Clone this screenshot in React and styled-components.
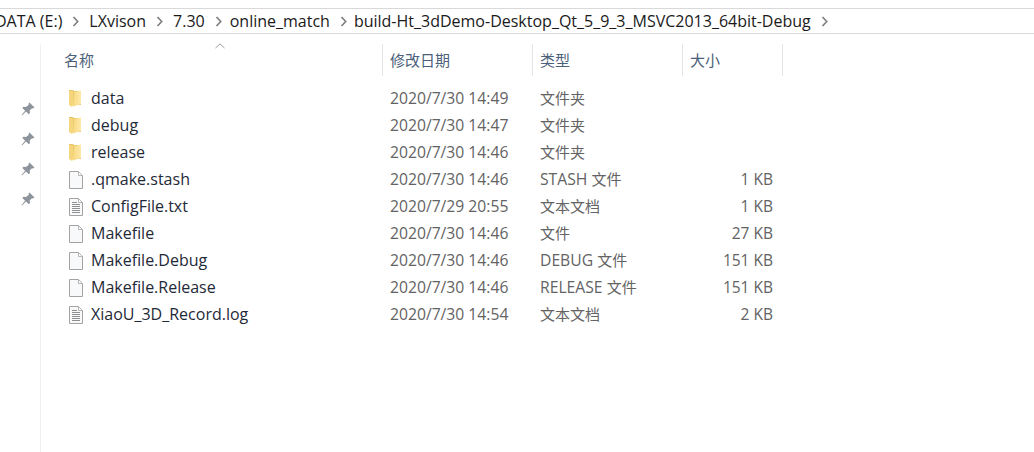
import React from 'react';
import styled, { createGlobalStyle } from 'styled-components';

const crumbs = ['DATA (E:)', 'LXvison', '7.30', 'online_match', 'build-Ht_3dDemo-Desktop_Qt_5_9_3_MSVC2013_64bit-Debug'];

const files = [
  { name: 'data', date: '2020/7/30 14:49', type: '文件夹', kind: 'folder' },
  { name: 'debug', date: '2020/7/30 14:47', type: '文件夹', kind: 'folder' },
  { name: 'release', date: '2020/7/30 14:46', type: '文件夹', kind: 'folder' },
  { name: '.qmake.stash', date: '2020/7/30 14:46', tag: 'STASH', type: '文件', size: '1 KB', kind: 'blank' },
  { name: 'ConfigFile.txt', date: '2020/7/29 20:55', type: '文本文档', size: '1 KB', kind: 'text' },
  { name: 'Makefile', date: '2020/7/30 14:46', type: '文件', size: '27 KB', kind: 'blank' },
  { name: 'Makefile.Debug', date: '2020/7/30 14:46', tag: 'DEBUG', type: '文件', size: '151 KB', kind: 'blank' },
  { name: 'Makefile.Release', date: '2020/7/30 14:46', tag: 'RELEASE', type: '文件', size: '151 KB', kind: 'blank' },
  { name: 'XiaoU_3D_Record.log', date: '2020/7/30 14:54', type: '文本文档', size: '2 KB', kind: 'text' },
];

function Chevron() {
  return (
    <svg width="8" height="11" viewBox="0 0 8 11">
      <path d="M1.500 1l4.200 4.500-4.200 4.500" fill="none" stroke="#808080" strokeWidth="1.700" />
    </svg>
  );
}

function Pin() {
  return (
    <svg width="14" height="14" viewBox="0 0 14 14">
      <path d="M8.500 .5l5 5-1.500 1-1-.3-2.300 2.300.3 2.500-1.200 1.200-2.800-2.800L1 13.500l-.5-.5 3.600-4.300-2.800-2.800 1.200-1.200 2.500.3L7.800 2.700l-.3-1z" fill="#8d949c" />
    </svg>
  );
}

function FolderIcon() {
  return (
    <svg width="13" height="17" viewBox="0 0 13 17">
      <defs>
        <linearGradient id="folderFront" x1="0" y1="0" x2="1" y2="0">
          <stop offset="0" stopColor="#f8d981" />
          <stop offset="1" stopColor="#fde9a9" />
        </linearGradient>
      </defs>
      <path d="M0 0h4l1 1h7v14H0z" fill="#e9c569" />
      <path d="M5 2l7-1.500V14l-8 2.500z" fill="url(#folderFront)" />
      <path d="M0 1h4v14l-1 2-3-2z" fill="#f5d67c" />
    </svg>
  );
}

function FileIcon({ kind }) {
  return (
    <svg width="14" height="18" viewBox="0 0 14 18">
      <path d="M.5.5h9l4 4v13H.5z" fill="#f7f9fa" stroke="#a3a3a3" />
      <path d="M9.500.5v4h4z" fill="#fff" stroke="#b5b5b5" />
      {kind === 'text' && (
        <path d="M3 4.500h5M3 6.500h8M3 8.500h8M3 10.500h8M3 12.500h8M3 14.500h8" stroke="#8f8f8f" strokeWidth="1" />
      )}
    </svg>
  );
}

export default function App() {
  return (
    <Page>
      <GlobalStyle />
      <AddressBar>
        {crumbs.map((crumb) => (
          <Crumb key={crumb}>
            <span>{crumb}</span>
            <Chevron />
          </Crumb>
        ))}
      </AddressBar>
      <Body>
        <Sidebar>
          <Pin />
          <Pin />
          <Pin />
          <Pin />
        </Sidebar>
        <Listing>
          <HeaderRow>
            <SortArrow>
              <svg width="10" height="6" viewBox="0 0 10 6">
                <path d="M.5 5L5 .8 9.500 5" fill="none" stroke="#9a9a9a" />
              </svg>
            </SortArrow>
            <HeaderCell width={342}>名称</HeaderCell>
            <HeaderCell width={150}>修改日期</HeaderCell>
            <HeaderCell width={150}>类型</HeaderCell>
            <HeaderCell width={100}>大小</HeaderCell>
          </HeaderRow>
          <Rows>
            {files.map((file) => (
              <Row key={file.name}>
                <IconSlot>
                  {file.kind === 'folder' ? <FolderIcon /> : <FileIcon kind={file.kind} />}
                </IconSlot>
                <Name>{file.name}</Name>
                <DateCell>{file.date}</DateCell>
                <TypeCell>
                  {file.tag && <TypeTag>{file.tag} </TypeTag>}
                  {file.type}
                </TypeCell>
                <Size>{file.size}</Size>
              </Row>
            ))}
          </Rows>
        </Listing>
      </Body>
    </Page>
  );
}

const GlobalStyle = createGlobalStyle`
  html, body {
    margin: 0;
    background: #fff;
  }
  body {
    font-family: 'Open Sans', 'Noto Sans CJK SC', sans-serif;
    font-size: 15px;
  }
`;

const Page = styled.div`
  width: 1034px;
  height: 452px;
  overflow: hidden;
  padding-top: 8px;
  box-sizing: border-box;
`;

const AddressBar = styled.div`
  display: flex;
  align-items: center;
  height: 26px;
  box-sizing: border-box;
  border-top: 1px solid #d9d9d9;
  border-bottom: 1px solid #d9d9d9;
  color: #1a1a1a;
  white-space: nowrap;
  overflow: hidden;
`;

const Crumb = styled.div`
  display: flex;
  align-items: center;
  gap: 10px;
  margin-right: 9px;
  font-size: 16px;
  line-height: 24px;

  &:first-child {
    margin-left: -5px;
  }
  &:nth-child(3) {
    margin-right: 7px;
  }
  &:nth-child(4) {
    margin-right: 6px;
  }
`;

const Body = styled.div`
  display: flex;
  padding-top: 10px;
`;

const Sidebar = styled.div`
  width: 41px;
  height: 408px;
  box-sizing: border-box;
  border-right: 1px solid #f0f0f0;
  display: flex;
  flex-direction: column;
  align-items: center;
  gap: 16px;
  padding: 58px 0 0 15px;
`;

const Listing = styled.div`
  flex: 1;
`;

const HeaderRow = styled.div`
  position: relative;
  display: flex;
  height: 32px;
`;

const SortArrow = styled.div`
  position: absolute;
  left: 174px;
  top: -1px;
  line-height: 0;
`;

const HeaderCell = styled.div`
  width: ${({ width }) => width}px;
  box-sizing: border-box;
  padding: 5px 0 0 ${({ width }) => (width === 342 ? 23 : 7)}px;
  border-right: 1px solid #e5e5e5;
  color: #4c607a;
  font-size: 15px;
`;

const Rows = styled.div`
  padding-top: 9px;
`;

const Row = styled.div`
  display: flex;
  align-items: center;
  height: 27px;
  line-height: 27px;
  white-space: nowrap;
`;

const IconSlot = styled.div`
  width: 50px;
  padding-left: 28px;
  box-sizing: border-box;
  display: flex;
  line-height: 0;
`;

const Name = styled.div`
  width: 299px;
  font-size: 16px;
  color: #1f2a38;
`;

const DateCell = styled.div`
  width: 150px;
  font-size: 15.7px;
  color: #636363;
`;

const TypeCell = styled.div`
  width: 110px;
  font-size: 15px;
  color: #636363;
`;

const TypeTag = styled.span`
  font-size: 15.7px;
`;

const Size = styled.div`
  width: 123px;
  text-align: right;
  font-size: 15.5px;
  color: #636363;
`;
